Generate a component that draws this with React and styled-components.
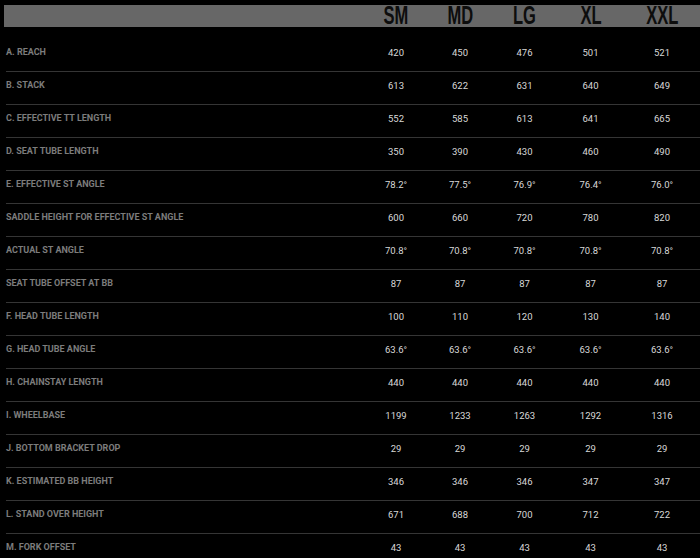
import styled, { createGlobalStyle } from "styled-components";

const Global = createGlobalStyle`
  html, body {
    margin: 0;
    background: #000;
  }
`;

const Page = styled.div`
  width: 700px;
  height: 558px;
  overflow: hidden;
  padding: 5px 0 0 4px;
  box-sizing: border-box;
  background: #000;
  font-family: Roboto, "Liberation Sans", sans-serif;
`;

const HeaderBar = styled.div`
  display: grid;
  grid-template-columns: 1fr 64px 64px 65px 67px 76px;
  height: 22px;
  background: #676767;
  margin-bottom: 12px;
`;

const SizeCell = styled.div`
  display: flex;
  justify-content: center;
  align-items: flex-start;
  height: 22px;
`;

const SizeText = styled.span`
  display: inline-block;
  font-family: "Liberation Sans Narrow", "Liberation Sans", sans-serif;
  font-weight: 700;
  font-size: 25px;
  line-height: 20px;
  margin-top: 0;
  color: #0d0d0d;
  transform: scaleX(0.66);
`;

const Row = styled.div`
  display: grid;
  grid-template-columns: 1fr 64px 64px 65px 67px 76px;
  margin-left: 2px;
  padding: 7px 0 12px;
  border-bottom: 1px solid #353535;
  line-height: 13px;
`;

const Label = styled.div`
  font-size: 9px;
  font-weight: 700;
  color: #7c7c7c;
  white-space: nowrap;
`;

const Value = styled.div`
  font-size: 9.5px;
  color: #d8d8d8;
  text-align: center;
`;

const sizes = ["SM", "MD", "LG", "XL", "XXL"];

const rows = [
  ["A. REACH", "420", "450", "476", "501", "521"],
  ["B. STACK", "613", "622", "631", "640", "649"],
  ["C. EFFECTIVE TT LENGTH", "552", "585", "613", "641", "665"],
  ["D. SEAT TUBE LENGTH", "350", "390", "430", "460", "490"],
  ["E. EFFECTIVE ST ANGLE", "78.2°", "77.5°", "76.9°", "76.4°", "76.0°"],
  ["SADDLE HEIGHT FOR EFFECTIVE ST ANGLE", "600", "660", "720", "780", "820"],
  ["ACTUAL ST ANGLE", "70.8°", "70.8°", "70.8°", "70.8°", "70.8°"],
  ["SEAT TUBE OFFSET AT BB", "87", "87", "87", "87", "87"],
  ["F. HEAD TUBE LENGTH", "100", "110", "120", "130", "140"],
  ["G. HEAD TUBE ANGLE", "63.6°", "63.6°", "63.6°", "63.6°", "63.6°"],
  ["H. CHAINSTAY LENGTH", "440", "440", "440", "440", "440"],
  ["I. WHEELBASE", "1199", "1233", "1263", "1292", "1316"],
  ["J. BOTTOM BRACKET DROP", "29", "29", "29", "29", "29"],
  ["K. ESTIMATED BB HEIGHT", "346", "346", "346", "347", "347"],
  ["L. STAND OVER HEIGHT", "671", "688", "700", "712", "722"],
  ["M. FORK OFFSET", "43", "43", "43", "43", "43"],
];

export default function App() {
  return (
    <Page>
      <Global />
      <HeaderBar>
        <div />
        {sizes.map((s) => (
          <SizeCell key={s}>
            <SizeText>{s}</SizeText>
          </SizeCell>
        ))}
      </HeaderBar>
      {rows.map(([label, ...vals]) => (
        <Row key={label}>
          <Label>{label}</Label>
          {vals.map((v, i) => (
            <Value key={i}>{v}</Value>
          ))}
        </Row>
      ))}
    </Page>
  );
}
